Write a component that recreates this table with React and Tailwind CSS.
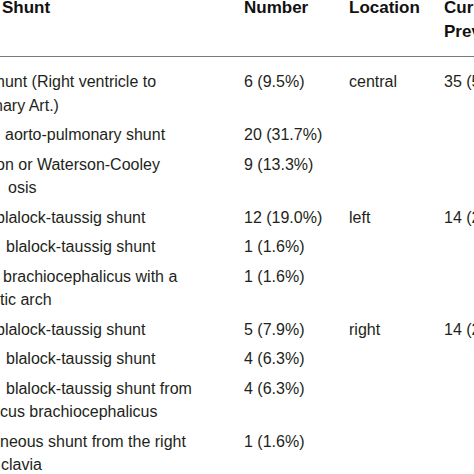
import React from "react";

const rows = [
  { lines: [{ t: "hunt (Right ventricle to", ml: -4 }, { t: "nary Art.)", ml: -6 }], n: "6 (9.5%)", loc: "central", cur: "35 (55.6%)" },
  { lines: [{ t: "l aorto-pulmonary shunt", ml: -3 }], n: "20 (31.7%)" },
  { lines: [{ t: "on or Waterson-Cooley", ml: -4 }, { t: "osis", ml: 8 }], n: "9 (13.3%)" },
  { lines: [{ t: "blalock-taussig shunt", ml: -4 }], n: "12 (19.0%)", loc: "left", cur: "14 (22.2%)" },
  { lines: [{ t: "blalock-taussig shunt", ml: 6 }], n: "1 (1.6%)" },
  { lines: [{ t: "brachiocephalicus with a", ml: 3 }, { t: "tic arch", ml: 0 }], n: "1 (1.6%)" },
  { lines: [{ t: "blalock-taussig shunt", ml: -4 }], n: "5 (7.9%)", loc: "right", cur: "14 (22.2%)" },
  { lines: [{ t: "blalock-taussig shunt", ml: 6 }], n: "4 (6.3%)" },
  { lines: [{ t: "blalock-taussig shunt from", ml: 6 }, { t: "cus brachiocephalicus", ml: 0 }], n: "4 (6.3%)" },
  { lines: [{ t: "neous shunt from the right", ml: 0 }, { t: "clavia", ml: 1 }], n: "1 (1.6%)" },
];

export default function App() {
  return (
    <div
      className="w-[474px] h-[474px] overflow-hidden bg-white text-[#231f20]"
      style={{ fontFamily: '"Liberation Sans", Arial, sans-serif' }}
    >
      <div className="w-[600px] -mt-[4px]">
        <div className="grid grid-cols-[244px_105px_95px_156px] pb-[12px] border-b border-[#7a7a7a] text-[17px] leading-[24px] font-bold text-[#111]">
          <div className="pl-[2px]">Shunt</div>
          <div>Number</div>
          <div>Location</div>
          <div className="w-[100px]">Current Prevalence</div>
        </div>
        <div className="pt-[10px] text-[16px] leading-[23.5px]">
          {rows.map((r, i) => (
            <div key={i} className="grid grid-cols-[244px_105px_95px_156px] py-[3px]">
              <div className="overflow-hidden">
                {r.lines.map((l, j) => (
                  <div key={j} className="whitespace-nowrap" style={{ marginLeft: l.ml }}>
                    {l.t}
                  </div>
                ))}
              </div>
              <div className="whitespace-nowrap">{r.n}</div>
              <div className="whitespace-nowrap">{r.loc || ""}</div>
              <div className="whitespace-nowrap">{r.cur || ""}</div>
            </div>
          ))}
        </div>
      </div>
    </div>
  );
}
